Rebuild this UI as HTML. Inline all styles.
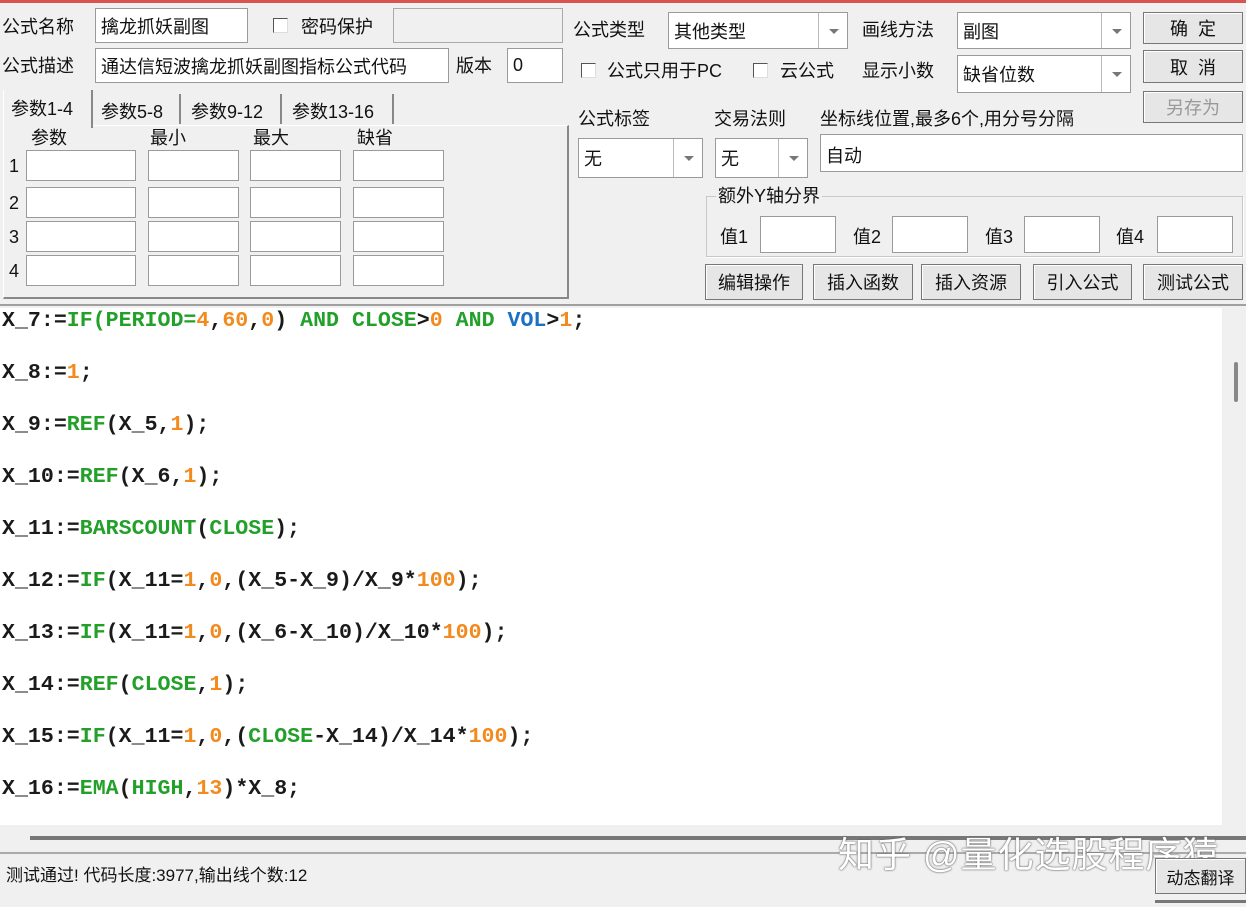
<!DOCTYPE html>
<html><head><meta charset="utf-8"><style>
*{margin:0;padding:0;box-sizing:border-box}
body{width:1246px;height:907px;background:#f0f0f0;position:relative;overflow:hidden;font-family:"Liberation Sans","Noto Sans CJK SC",sans-serif;font-size:18px;color:#111}
.a{position:absolute}
.t{position:absolute;line-height:20px;white-space:nowrap}
.in{position:absolute;background:#fff;border:1px solid #9a9a9a;padding-left:5px;white-space:nowrap;display:flex;align-items:center}
.cb{position:absolute;width:15px;height:15px;background:#fff;border:1px solid #555;border-right-color:#ddd;border-bottom-color:#ddd}
.dd{position:absolute;right:0;top:0;bottom:0;width:29px;border-left:1px solid #bbb;background:#fff}
.dd:after{content:"";position:absolute;left:10px;top:50%;margin-top:-2px;border-left:5px solid transparent;border-right:5px solid transparent;border-top:5px solid #777}
.btn{position:absolute;background:#e6e6e6;border:1px solid #777;box-shadow:inset 1px 1px 0 #fff;display:flex;align-items:center;justify-content:center;white-space:nowrap}
.code{position:absolute;left:0;top:308px;width:1222px;height:517px;background:#fff;overflow:hidden}
.lines{position:absolute;left:2px;top:-13px;font-family:"Liberation Mono",monospace;font-weight:bold;font-size:21.6px;line-height:52px;white-space:pre;color:#1a1a1a}
.g{color:#22a02a}.o{color:#f28a1e}.b{color:#1b6fc4}
</style></head><body>
<div class="a" style="left:0;top:0;width:1246px;height:3px;background:#d9534f"></div>

<div class="t" style="left:2px;top:17px">公式名称</div>
<div class="in" style="left:95px;top:8px;width:153px;height:35px">擒龙抓妖副图</div>
<div class="cb" style="left:273px;top:18px"></div>
<div class="t" style="left:301px;top:17px">密码保护</div>
<div class="a" style="left:393px;top:8px;width:170px;height:35px;border:1px solid #aaa;background:#f0f0f0"></div>

<div class="t" style="left:2px;top:56px">公式描述</div>
<div class="in" style="left:95px;top:48px;width:354px;height:35px">通达信短波擒龙抓妖副图指标公式代码</div>
<div class="t" style="left:456px;top:56px">版本</div>
<div class="in" style="left:507px;top:48px;width:56px;height:35px">0</div>

<div class="a" style="left:3px;top:125px;width:566px;height:174px;border:1px solid #fff;border-right:2px solid #888;border-bottom:2px solid #888"></div>
<div class="a" style="left:3px;top:90px;width:90px;height:38px;background:#f0f0f0;border-left:1px solid #fff;border-right:2px solid #888"></div>
<div class="t" style="left:11px;top:99px">参数1-4</div>
<div class="t" style="left:101px;top:102px">参数5-8</div>
<div class="a" style="left:179px;top:94px;width:2px;height:30px;background:#888"></div>
<div class="t" style="left:191px;top:102px">参数9-12</div>
<div class="a" style="left:280px;top:94px;width:2px;height:30px;background:#888"></div>
<div class="t" style="left:292px;top:102px">参数13-16</div>
<div class="a" style="left:392px;top:94px;width:2px;height:30px;background:#888"></div>

<div class="t" style="left:31px;top:128px">参数</div>
<div class="t" style="left:150px;top:128px">最小</div>
<div class="t" style="left:253px;top:128px">最大</div>
<div class="t" style="left:357px;top:128px">缺省</div>

<div class="t" style="left:9px;top:156px">1</div>
<div class="t" style="left:9px;top:193px">2</div>
<div class="t" style="left:9px;top:227px">3</div>
<div class="t" style="left:9px;top:261px">4</div>
<div class="in" style="left:26px;top:150px;width:110px;height:31px"></div>
<div class="in" style="left:148px;top:150px;width:91px;height:31px"></div>
<div class="in" style="left:250px;top:150px;width:91px;height:31px"></div>
<div class="in" style="left:353px;top:150px;width:91px;height:31px"></div>
<div class="in" style="left:26px;top:187px;width:110px;height:31px"></div>
<div class="in" style="left:148px;top:187px;width:91px;height:31px"></div>
<div class="in" style="left:250px;top:187px;width:91px;height:31px"></div>
<div class="in" style="left:353px;top:187px;width:91px;height:31px"></div>
<div class="in" style="left:26px;top:221px;width:110px;height:31px"></div>
<div class="in" style="left:148px;top:221px;width:91px;height:31px"></div>
<div class="in" style="left:250px;top:221px;width:91px;height:31px"></div>
<div class="in" style="left:353px;top:221px;width:91px;height:31px"></div>
<div class="in" style="left:26px;top:255px;width:110px;height:31px"></div>
<div class="in" style="left:148px;top:255px;width:91px;height:31px"></div>
<div class="in" style="left:250px;top:255px;width:91px;height:31px"></div>
<div class="in" style="left:353px;top:255px;width:91px;height:31px"></div>

<div class="t" style="left:573px;top:20px">公式类型</div>
<div class="in" style="left:668px;top:12px;width:180px;height:37px">其他类型<span class="dd"></span></div>
<div class="t" style="left:862px;top:20px">画线方法</div>
<div class="in" style="left:957px;top:12px;width:174px;height:37px">副图<span class="dd"></span></div>
<div class="btn" style="left:1143px;top:12px;width:100px;height:32px">确&nbsp;&nbsp;定</div>

<div class="cb" style="left:581px;top:63px"></div>
<div class="t" style="left:607px;top:61px">公式只用于PC</div>
<div class="cb" style="left:753px;top:63px"></div>
<div class="t" style="left:780px;top:61px">云公式</div>
<div class="t" style="left:862px;top:61px">显示小数</div>
<div class="in" style="left:957px;top:55px;width:174px;height:38px">缺省位数<span class="dd"></span></div>
<div class="btn" style="left:1143px;top:50px;width:100px;height:33px">取&nbsp;&nbsp;消</div>
<div class="btn" style="left:1143px;top:91px;width:100px;height:32px;color:#999">另存为</div>

<div class="t" style="left:578px;top:109px">公式标签</div>
<div class="t" style="left:714px;top:109px">交易法则</div>
<div class="t" style="left:820px;top:109px">坐标线位置,最多6个,用分号分隔</div>
<div class="in" style="left:578px;top:138px;width:125px;height:40px">无<span class="dd"></span></div>
<div class="in" style="left:715px;top:138px;width:93px;height:40px">无<span class="dd"></span></div>
<div class="in" style="left:820px;top:134px;width:423px;height:38px;align-items:flex-start;padding-top:7px">自动</div>

<div class="a" style="left:706px;top:196px;width:537px;height:61px;border:1px solid #c8c8c8;box-shadow:1px 1px 0 #fff"></div>
<div class="t" style="left:716px;top:186px;background:#f0f0f0;padding:0 2px">额外Y轴分界</div>
<div class="t" style="left:720px;top:227px">值1</div>
<div class="in" style="left:760px;top:216px;width:76px;height:37px"></div>
<div class="t" style="left:853px;top:227px">值2</div>
<div class="in" style="left:892px;top:216px;width:76px;height:37px"></div>
<div class="t" style="left:985px;top:227px">值3</div>
<div class="in" style="left:1024px;top:216px;width:76px;height:37px"></div>
<div class="t" style="left:1116px;top:227px">值4</div>
<div class="in" style="left:1157px;top:216px;width:76px;height:37px"></div>

<div class="btn" style="left:705px;top:264px;width:98px;height:36px">编辑操作</div>
<div class="btn" style="left:813px;top:264px;width:100px;height:36px">插入函数</div>
<div class="btn" style="left:921px;top:264px;width:100px;height:36px">插入资源</div>
<div class="btn" style="left:1033px;top:264px;width:99px;height:36px">引入公式</div>
<div class="btn" style="left:1143px;top:264px;width:100px;height:36px">测试公式</div>

<div class="a" style="left:0;top:304px;width:1246px;height:2px;background:#a0a0a0"></div>

<div class="code"><div class="lines">X_7:=<span class="g">IF(PERIOD=</span><span class="o">4</span>,<span class="o">60</span>,<span class="o">0</span>) <span class="g">AND CLOSE</span>&gt;<span class="o">0</span> <span class="g">AND</span> <span class="b">VOL</span>&gt;<span class="o">1</span>;
X_8:=<span class="o">1</span>;
X_9:=<span class="g">REF</span>(X_5,<span class="o">1</span>);
X_10:=<span class="g">REF</span>(X_6,<span class="o">1</span>);
X_11:=<span class="g">BARSCOUNT</span>(<span class="g">CLOSE</span>);
X_12:=<span class="g">IF</span>(X_11=<span class="o">1</span>,<span class="o">0</span>,(X_5-X_9)/X_9*<span class="o">100</span>);
X_13:=<span class="g">IF</span>(X_11=<span class="o">1</span>,<span class="o">0</span>,(X_6-X_10)/X_10*<span class="o">100</span>);
X_14:=<span class="g">REF</span>(<span class="g">CLOSE</span>,<span class="o">1</span>);
X_15:=<span class="g">IF</span>(X_11=<span class="o">1</span>,<span class="o">0</span>,(<span class="g">CLOSE</span>-X_14)/X_14*<span class="o">100</span>);
X_16:=<span class="g">EMA</span>(<span class="g">HIGH</span>,<span class="o">13</span>)*X_8;</div></div>
<div class="a" style="left:1234px;top:362px;width:4px;height:40px;background:#888;border-radius:2px"></div>

<div class="a" style="left:30px;top:836px;width:1216px;height:4px;background:#777"></div>
<div class="a" style="left:0;top:852px;width:1246px;height:2px;background:#aaa"></div>
<div class="t" style="left:6px;top:866px;font-size:17px">测试通过! 代码长度:3977,输出线个数:12</div>
<div class="t" style="left:838px;top:834px;font-size:36px;line-height:42px;letter-spacing:1px;color:#fff;text-shadow:0 0 2px #666,0 0 1px #444">知乎 @量化选股程序猿</div>
<div class="btn" style="left:1155px;top:858px;width:91px;height:36px;font-size:17px">动态翻译</div>
<div class="a" style="left:1155px;top:900px;width:91px;height:3px;background:#777"></div>
</body></html>
